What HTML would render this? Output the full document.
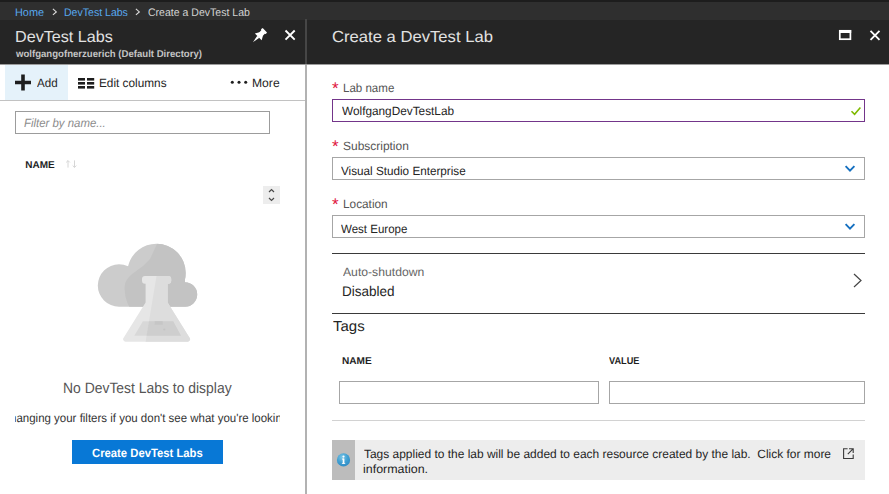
<!DOCTYPE html>
<html><head><meta charset="utf-8">
<style>
*{box-sizing:border-box;margin:0;padding:0}
html,body{width:889px;height:494px;overflow:hidden;background:#fff;font-family:"Liberation Sans",sans-serif;color:#252525}
.a{position:absolute}
.t{position:absolute;white-space:nowrap;line-height:20px;transform-origin:0 0;text-rendering:geometricPrecision}
.inp{position:absolute;height:23px;border:1px solid #a6a6a6;background:#fff}
</style></head><body>
<!-- top bars -->
<div class="a" style="left:0;top:2px;width:889px;height:18px;background:#2f2f2f"></div>
<div class="a" style="left:0;top:0;width:889px;height:2px;background:#1d1d1d"></div>
<div class="a" style="left:0;top:20px;width:889px;height:44px;background:#252525"></div>
<div class="a" style="left:0;top:64px;width:889px;height:1px;background:#9c9c9c"></div>
<div class="a" style="left:305px;top:65px;width:2px;height:429px;background:#b2b2b2"></div>
<div class="a" style="left:305px;top:19px;width:2px;height:45px;background:#464646"></div>

<!-- breadcrumb chevrons -->
<svg class="a" style="left:52px;top:7.800px" width="6" height="8" viewBox="0 0 6 8"><path d="M0.900 0.900 L4.300 3.900 L0.900 6.900" stroke="#dcdcdc" stroke-width="1.150" fill="none"/></svg>
<svg class="a" style="left:135.300px;top:7.800px" width="6" height="8" viewBox="0 0 6 8"><path d="M0.900 0.900 L4.300 3.900 L0.900 6.900" stroke="#dcdcdc" stroke-width="1.150" fill="none"/></svg>

<!-- left header icons -->
<svg class="a" style="left:252px;top:27px" width="16" height="16" viewBox="0 0 16 16"><g transform="translate(6.9,9.2) rotate(45)" fill="#fff"><rect x="-3.300" y="-8.400" width="6.600" height="2.400" rx="0.600"/><rect x="-2.500" y="-6.500" width="5" height="4"/><path d="M-2.500 -3.200 L2.500 -3.200 L4.800 0.900 L-4.800 0.900 Z"/><path d="M-1.400 0.800 L1.400 0.800 L0 8.500 Z"/></g></svg>
<svg class="a" style="left:284px;top:29px" width="12" height="12" viewBox="0 0 12 12"><path d="M1.500 1.500 L10.700 10.700 M10.700 1.500 L1.500 10.700" stroke="#fff" stroke-width="1.900" fill="none"/></svg>

<!-- right header icons -->
<svg class="a" style="left:838px;top:29px" width="14" height="12" viewBox="0 0 14 12"><rect x="1.800" y="1.800" width="10.600" height="8.400" fill="none" stroke="#fff" stroke-width="1.700"/><rect x="1" y="1" width="12.2" height="3" fill="#fff"/></svg>
<svg class="a" style="left:869px;top:29px" width="12" height="12" viewBox="0 0 12 12"><path d="M1.500 1.800 L10.500 10.800 M10.500 1.800 L1.500 10.800" stroke="#fff" stroke-width="1.900" fill="none"/></svg>

<!-- toolbar -->
<div class="a" style="left:5px;top:65px;width:63px;height:35px;background:#e5f2fa"></div>
<svg class="a" style="left:15px;top:74px" width="17" height="17" viewBox="0 0 17 17"><path d="M8 0.5 V16.5 M0 8.5 H16" stroke="#1e1e1e" stroke-width="3.600" fill="none"/></svg>
<svg class="a" style="left:78px;top:78px" width="17" height="11" viewBox="0 0 17 11"><g fill="#1e1e1e"><rect x="0" y="0" width="7" height="2.600"/><rect x="9" y="0" width="7.2" height="2.600"/><rect x="0" y="4" width="7" height="2.600"/><rect x="9" y="4" width="7.2" height="2.600"/><rect x="0" y="8" width="7" height="2.600"/><rect x="9" y="8" width="7.2" height="2.600"/></g></svg>
<svg class="a" style="left:230px;top:80px" width="18" height="4" viewBox="0 0 18 4"><g fill="#1e1e1e"><circle cx="2.3" cy="2.2" r="1.5"/><circle cx="9" cy="2.2" r="1.5"/><circle cx="15.7" cy="2.2" r="1.5"/></g></svg>
<div class="a" style="left:0;top:100px;width:305px;height:1px;background:#c2c2c2"></div>

<!-- filter -->
<div class="a" style="left:15px;top:111px;width:255px;height:23px;border:1px solid #9c9c9c;background:#fff"></div>
<svg class="a" style="left:65px;top:159px" width="13" height="10" viewBox="0 0 13 10"><path d="M3 8.600 V1.600 M1.200 3.400 L3 1.600 L4.800 3.400 M9.500 1.400 V8.400 M7.700 6.600 L9.500 8.400 L11.300 6.600" stroke="#d6d6d6" stroke-width="1" fill="none"/></svg>
<div class="a" style="left:263px;top:186px;width:17px;height:18px;background:#ededed"></div>
<svg class="a" style="left:267px;top:187px" width="9" height="16" viewBox="0 0 9 16"><path d="M2 5 L4.5 2.5 L7 5 M2 11 L4.5 13.5 L7 11" stroke="#4a4a4a" stroke-width="1.2" fill="none"/></svg>

<!-- illustration -->
<svg class="a" style="left:90px;top:235px" width="120" height="120" viewBox="0 0 120 120">
<defs>
<clipPath id="cl"><circle cx="66.5" cy="38" r="29.2"/><circle cx="29" cy="50.500" r="21.200"/><circle cx="95" cy="59.500" r="12.200"/><rect x="29" y="45" width="66" height="26.700"/></clipPath>
<clipPath id="fl"><path d="M55 41 h23.200 a3 3 0 0 1 3 3 v1.800 a3 3 0 0 1 -3 3 h-0.600 v18.700 l21.800 35 a2.500 2.500 0 0 1 -2.100 4.200 h-61.400 a2.500 2.500 0 0 1 -2.100 -4.200 l21.800 -35 v-18.700 h-0.600 a3 3 0 0 1 -3 -3 v-1.800 a3 3 0 0 1 3 -3z"/></clipPath>
</defs>
<g clip-path="url(#cl)">
<rect x="0" y="0" width="120" height="80" fill="#cccccc"/>
<path d="M67.400 8 L60 24 Q54 31 45.500 36.600 Q37 42 35 49 Q33.500 58 37.400 68 L40 73 H120 V0 Z" fill="#c3c3c3"/>
</g>
<g clip-path="url(#fl)">
<rect x="30" y="40" width="75" height="70" fill="#e6e6e6"/>
<path d="M66.500 41 L55.300 108.700 H110 V41 Z" fill="#dddddd"/>
<path d="M52.900 86.200 H83.200 L91 100.700 H44.300 Z" fill="#d8d8d8"/>
<path d="M59 86.200 H83.200 L91 100.700 H56.600 Z" fill="#cecece"/>
<rect x="64.700" y="86.200" width="8" height="3.600" fill="#c6c6c6"/>
<circle cx="74.300" cy="94.500" r="1.100" fill="#c4c4c4"/>
</g>
</svg>


<div class="a" style="left:72px;top:440px;width:151px;height:24px;background:#0878d6"></div>

<!-- clipped sentence -->
<div class="a" style="left:15px;top:405px;width:264.5px;height:25px;overflow:hidden"><div class="t" style="left:-30.00px;top:2.70px;font-size:12px;color:#333;transform:scaleX(0.9565)">Try changing your filters if you don't see what you're looking for.</div></div>

<!-- right form -->
<div class="inp" style="left:332px;top:99px;width:533px;border-color:#73358a"></div>
<svg class="a" style="left:850px;top:106px" width="12" height="10" viewBox="0 0 12 10"><path d="M1.5 5.2 L4.6 8.3 L10.4 1.6" stroke="#7fba00" stroke-width="1.6" fill="none"/></svg>
<div class="inp" style="left:332px;top:157px;width:533px"></div>
<svg class="a" style="left:844px;top:165px" width="12" height="8" viewBox="0 0 12 8"><path d="M1.6 1.2 L6 5.6 L10.4 1.2" stroke="#1570c0" stroke-width="1.9" fill="none"/></svg>
<div class="inp" style="left:332px;top:215px;width:533px"></div>
<svg class="a" style="left:844px;top:223px" width="12" height="8" viewBox="0 0 12 8"><path d="M1.6 1.2 L6 5.6 L10.4 1.2" stroke="#1570c0" stroke-width="1.9" fill="none"/></svg>

<div class="a" style="left:332px;top:253px;width:533px;height:1px;background:#3a3a3a"></div>
<svg class="a" style="left:853px;top:273px" width="9" height="15" viewBox="0 0 9 15"><path d="M1 1 L8 7.5 L1 14" stroke="#444" stroke-width="1.2" fill="none"/></svg>
<div class="a" style="left:332px;top:313px;width:533px;height:1px;background:#3a3a3a"></div>

<div class="inp" style="left:339px;top:381px;width:260px"></div>
<div class="inp" style="left:609px;top:381px;width:256px"></div>
<div class="a" style="left:332px;top:420px;width:533px;height:1px;background:#d2d2d2"></div>

<div class="a" style="left:332px;top:440px;width:533px;height:40px;background:#ededed"></div>
<div class="a" style="left:332px;top:440px;width:23px;height:40px;background:#bcbcbc"></div>
<svg class="a" style="left:336px;top:452px" width="16" height="16" viewBox="0 0 16 16"><defs><radialGradient id="ig" cx="0.4" cy="0.3" r="0.75"><stop offset="0" stop-color="#7cc6e6"/><stop offset="0.55" stop-color="#3f9fd2"/><stop offset="1" stop-color="#2f8ac4"/></radialGradient></defs><circle cx="7.500" cy="7.900" r="6.600" fill="url(#ig)"/><rect x="6.700" y="6.600" width="1.700" height="5" fill="#fff"/><rect x="6" y="6.600" width="2" height="0.900" fill="#fff"/><rect x="5.900" y="10.900" width="3.300" height="0.900" fill="#fff"/><circle cx="7.500" cy="4.600" r="1.100" fill="#fff"/></svg>
<svg class="a" style="left:842px;top:447px" width="13" height="13" viewBox="0 0 13 13"><path d="M5.600 1.700 H1.600 V11.500 H11.200 V7.400 M7 1.700 H11.200 V6 M5.800 7.200 L11 1.900" stroke="#3a3a3a" stroke-width="1.100" fill="none"/></svg>

<!-- stars -->
<div class="t" style="left:332px;top:79px;font-size:17px;color:#e0143c">*</div>
<div class="t" style="left:332px;top:137px;font-size:17px;color:#e0143c">*</div>
<div class="t" style="left:332px;top:195px;font-size:17px;color:#e0143c">*</div>


<!-- texts -->
<div class="t" style="left:15.11px;top:2.7px;font-size:11px;color:#58a8ee;transform:scaleX(0.9893)">Home</div>
<div class="t" style="left:64.34px;top:2.7px;font-size:11px;color:#58a8ee;transform:scaleX(0.9585)">DevTest Labs</div>
<div class="t" style="left:147.89px;top:2.7px;font-size:11px;color:#d2d2d2;transform:scaleX(0.9581)">Create a DevTest Lab</div>
<div class="t" style="left:15.34px;top:27.5px;font-size:16px;color:#e2e2e2;transform:scaleX(1.0094)">DevTest Labs</div>
<div class="t" style="left:15.85px;top:45.0px;font-size:10px;color:#c4c4c4;transform:scaleX(0.9591);font-weight:bold">wolfgangofnerzuerich (Default Directory)</div>
<div class="t" style="left:36.85px;top:73.0px;font-size:12px;color:#252525;transform:scaleX(0.9667)">Add</div>
<div class="t" style="left:99.37px;top:73.0px;font-size:12px;color:#252525;transform:scaleX(0.9836)">Edit columns</div>
<div class="t" style="left:251.94px;top:72.8px;font-size:12px;color:#252525;transform:scaleX(1.0115)">More</div>
<div class="t" style="left:24.35px;top:112.9px;font-size:12px;color:#8c8c8c;transform:scaleX(0.9506);font-style:italic">Filter by name...</div>
<div class="t" style="left:25.3px;top:156.0px;font-size:10px;color:#1e1e1e;transform:scaleX(1.0);font-weight:bold">NAME</div>
<div class="t" style="left:62.82px;top:378.9px;font-size:15px;color:#555555;transform:scaleX(0.9276)">No DevTest Labs to display</div>
<div class="t" style="left:92.41px;top:442.8px;font-size:12px;color:#ffffff;transform:scaleX(0.9397);font-weight:bold">Create DevTest Labs</div>
<div class="t" style="left:331.81px;top:27.7px;font-size:16px;color:#e2e2e2;transform:scaleX(1.0399)">Create a DevTest Lab</div>
<div class="t" style="left:343.09px;top:77.9px;font-size:12px;color:#555555;transform:scaleX(0.9615)">Lab name</div>
<div class="t" style="left:341.55px;top:100.9px;font-size:12px;color:#252525;transform:scaleX(0.9842)">WolfgangDevTestLab</div>
<div class="t" style="left:343.05px;top:135.8px;font-size:12px;color:#555555;transform:scaleX(0.9969)">Subscription</div>
<div class="t" style="left:341.45px;top:160.9px;font-size:12px;color:#252525;transform:scaleX(0.9756)">Visual Studio Enterprise</div>
<div class="t" style="left:343.07px;top:194.0px;font-size:12px;color:#555555;transform:scaleX(0.9841)">Location</div>
<div class="t" style="left:341.45px;top:218.8px;font-size:12px;color:#252525;transform:scaleX(0.9594)">West Europe</div>
<div class="t" style="left:342.85px;top:262.0px;font-size:12px;color:#666666;transform:scaleX(1.015)">Auto-shutdown</div>
<div class="t" style="left:342.38px;top:280.7px;font-size:14px;color:#252525;transform:scaleX(0.966)">Disabled</div>
<div class="t" style="left:332.85px;top:316.7px;font-size:14.5px;color:#252525;transform:scaleX(1.0333)">Tags</div>
<div class="t" style="left:342.04px;top:352.0px;font-size:10px;color:#1e1e1e;transform:scaleX(1.0107);font-weight:bold">NAME</div>
<div class="t" style="left:609.15px;top:352.0px;font-size:10px;color:#1e1e1e;transform:scaleX(0.9182);font-weight:bold">VALUE</div>
<div class="t" style="left:363.95px;top:443.9px;font-size:12px;color:#252525;transform:scaleX(0.9959)">Tags applied to the lab will be added to each resource created by the lab.&nbsp; Click for more</div>
<div class="t" style="left:362.91px;top:458.5px;font-size:12px;color:#252525;transform:scaleX(1.0377)">information.</div>
</body></html>
